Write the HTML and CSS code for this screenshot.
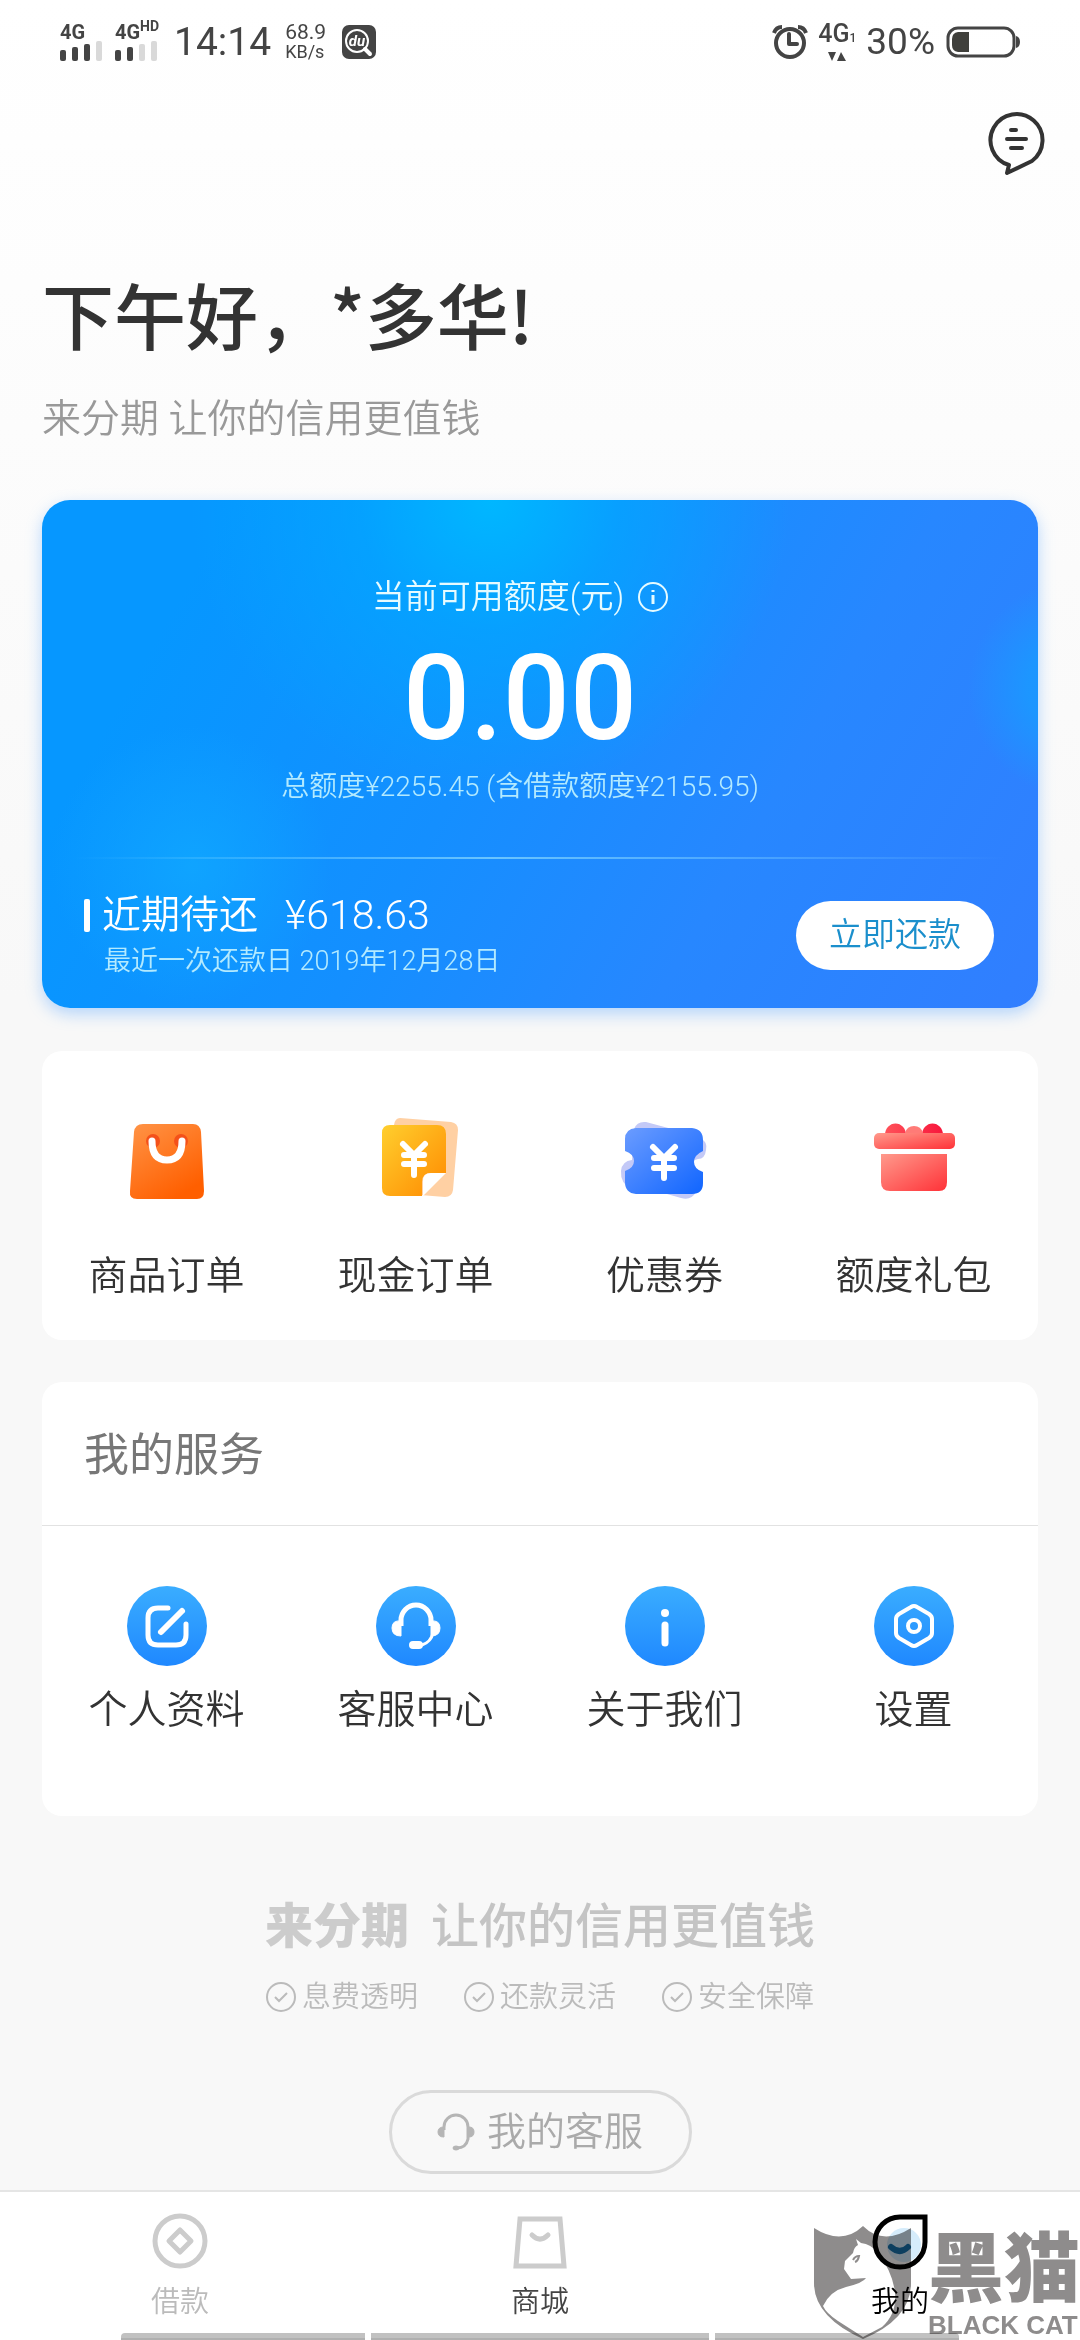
FILE: index.html
```html
<!DOCTYPE html>
<html lang="zh-CN">
<head>
    <title>我的</title>
    <meta charset="UTF-8">
    <meta name="viewport" content="width=device-width, initial-scale=1.0">
    <link rel="stylesheet" href="styles.css">
</head>
<body>
<div class="statusbar">
    <div class="signal">
        <span class="net">4G</span>
        <svg width="42" height="20" viewBox="0 0 42 20" fill="#444">
            <rect y="9" width="6" height="11" rx="2"/>
            <rect x="12" y="6" width="6" height="14" rx="2"/>
            <rect x="24" y="3" width="6" height="17" rx="2"/>
            <rect x="36" width="6" height="20" rx="2" fill="#d9d9d9"/>
        </svg>
    </div>
    <div class="signal">
        <span class="net">4G<sup>HD</sup></span>
        <svg width="42" height="20" viewBox="0 0 42 20" fill="#444">
            <rect y="9" width="6" height="11" rx="2"/>
            <rect x="12" y="6" width="6" height="14" rx="2"/>
            <rect x="24" y="3" width="6" height="17" rx="2" fill="#d9d9d9"/>
            <rect x="36" width="6" height="20" rx="2" fill="#d9d9d9"/>
        </svg>
    </div>
    <span class="clock">14:14</span>
    <span class="speed">68.9<small>KB/s</small></span>
    <span class="du">
        <svg width="34" height="34" viewBox="0 0 34 34">
            <rect width="34" height="34" rx="7" fill="#444"/>
            <circle cx="15" cy="16" r="11" fill="none" stroke="#fff" stroke-width="2"/>
            <path d="M23 24l5 5" stroke="#fff" stroke-width="4" stroke-linecap="round"/>
            <text x="15" y="21" class="du-text">du</text>
        </svg>
    </span>
    <div class="status-right">
        <svg width="36" height="36" viewBox="0 0 36 36" fill="none" stroke="#444">
            <circle cx="18" cy="19" r="14" stroke-width="4"/>
            <path d="M17 10v10h8" stroke-width="4" stroke-linecap="round" stroke-linejoin="round"/>
            <path d="M2 9q2-6 8-6M34 9q-2-6-8-6" stroke-width="4"/>
        </svg>
        <div class="data">
            <span>4G<small>1</small></span>
            <svg width="18" height="9" viewBox="0 0 18 9" fill="#444"><path d="M0 0h8l-4 9zM9 9h9l-5-9z"/></svg>
        </div>
        <span class="percent">30%</span>
        <svg width="73" height="30" viewBox="0 0 73 30">
            <rect x="1" y="1" width="66" height="28" rx="10" fill="none" stroke="#444" stroke-width="3"/>
            <path d="M11 5h11v20H11q-6-1-6-7v-6q0-6 6-7z" fill="#40403c"/>
            <path d="M69 9q4 1 4 6t-4 6z" fill="#444"/>
        </svg>
    </div>
</div>

<main>
    <div class="topbar">
        <button class="icon-btn" aria-label="消息">
            <svg width="60" height="64" viewBox="0 0 60 64" fill="none" stroke="#333" stroke-width="4" stroke-linecap="round" stroke-linejoin="round">
                <path d="M23 53A26 26 0 1 1 46 49L21 61z"/>
                <path d="M25 18h5M21 27h19M25 36h11"/>
            </svg>
        </button>
    </div>
    <h1>下午好，*多华!</h1>
    <p class="subtitle">来分期 让你的信用更值钱</p>

    <section class="credit">
        <div class="credit-main">
            <p class="credit-label">当前可用额度(元)
                <svg width="30" height="30" viewBox="0 0 30 30" fill="none" stroke="#e6fbff" stroke-width="2">
                    <circle cx="15" cy="15" r="14"/>
                    <path d="M15 13v9M15 8v2" stroke-width="3"/>
                </svg>
            </p>
            <p class="amount">0.00</p>
            <p class="credit-sub">总额度¥2255.45 (含借款额度¥2155.95)</p>
        </div>
        <div class="credit-line"></div>
        <div class="repay">
            <div>
                <p class="repay-title">近期待还<span>¥618.63</span></p>
                <p class="repay-date">最近一次还款日 2019年12月28日</p>
            </div>
            <button class="repay-btn">立即还款</button>
        </div>
    </section>

    <nav class="card orders">
        <a href="#" class="item">
            <svg width="80" height="80" viewBox="0 0 80 80">
                <defs>
                    <linearGradient id="bag" x1="0" y1="0" x2=".6" y2="1"><stop stop-color="#ff9447"/><stop offset="1" stop-color="#ff5f00"/></linearGradient>
                </defs>
                <path d="M16 3h50q7 0 8 8l3 59q0 8-7 8H10q-8 0-7-8l4-59q1-8 9-8z" fill="url(#bag)"/>
                <circle cx="26" cy="20" r="7" fill="#f4511a"/>
                <circle cx="54" cy="20" r="7" fill="#f4511a"/>
                <path d="M25 20q0 19 15 19t15-19" fill="none" stroke="#fff" stroke-width="7" stroke-linecap="round"/>
            </svg>
            <span>商品订单</span>
        </a>
        <a href="#" class="item">
            <svg width="80" height="80" viewBox="0 0 80 80">
                <defs>
                    <linearGradient id="cash" x1="0" y1="0" x2="1" y2="1"><stop stop-color="#ffcf2e"/><stop offset="1" stop-color="#ff8a00"/></linearGradient>
                </defs>
                <path d="M24-3l51 4q7 1 7 8l-5 60q-1 7-8 7l-50-4q-6-1-5-8l4-60q1-7 6-7z" fill="#ffd0a3"/>
                <path d="M14 4h47q9 0 9 9v39H55q-9 0-9 9v14H14q-8 0-8-8V12q0-8 8-8z" fill="url(#cash)"/>
                <path d="M70 52L47 75V60q0-8 8-8z" fill="#fff"/>
                <path d="M27 23l11 11 11-11M28 34h20M28 43h20M38 34v20" fill="none" stroke="#fff" stroke-width="6" stroke-linecap="round" stroke-linejoin="round"/>
            </svg>
            <span>现金订单</span>
        </a>
        <a href="#" class="item">
            <svg width="88" height="80" viewBox="0 0 88 80">
                <defs>
                    <linearGradient id="coupon" x1="0" y1="0" x2="1" y2="1"><stop stop-color="#6b9cff"/><stop offset="1" stop-color="#1065ff"/></linearGradient>
                </defs>
                <path d="M13 8q3-8 12-7l26 7 29 10q7 3 5 11-1 9-8 9l-6 2 4 31q-5 9-15 6l-14-4-35-4Q-1 62 0 50q1-10 11-11z" fill="#c3c9f7"/>
                <path d="M15 7h56q11 1 11 12v11q-9 4-9 11t9 10v11q0 11-11 11H15Q4 72 4 61V50q9-3 9-10T4 30V18Q4 8 15 7z" fill="url(#coupon)"/>
                <path d="M32 26l11 11 11-11M33 37h20M33 47h20M43 37v20" fill="none" stroke="#fff" stroke-width="6" stroke-linecap="round" stroke-linejoin="round"/>
            </svg>
            <span>优惠券</span>
        </a>
        <a href="#" class="item">
            <svg width="82" height="80" viewBox="0 0 82 80">
                <defs>
                    <linearGradient id="gift" x1="0" y1="0" x2="1" y2="1"><stop stop-color="#ff9a8c"/><stop offset="1" stop-color="#ff3238"/></linearGradient>
                    <linearGradient id="bow" x1="0" x2="1"><stop stop-color="#ff5159"/><stop offset="1" stop-color="#f8173c"/></linearGradient>
                </defs>
                <path d="M12 14a10 11 0 0 1 21 0zM49 14a10 11 0 0 1 21 0z" fill="url(#bow)"/>
                <path d="M32 12q2-7 9-7t9 7v3H32z" fill="#ff7b77"/>
                <rect x="1" y="12" width="81" height="16" rx="5" fill="url(#gift)"/>
                <path d="M8 33h66v28q0 9-8 9H17q-9 0-9-9z" fill="url(#gift)"/>
            </svg>
            <span>额度礼包</span>
        </a>
    </nav>

    <section class="card services">
        <h2>我的服务</h2>
        <nav class="service-list">
            <a href="#" class="item">
                <svg class="round" width="80" height="80" viewBox="0 0 80 80" fill="none" stroke="#fff" stroke-width="5" stroke-linecap="round">
                    <path d="M41 22H31q-10 0-10 10v17q0 10 10 10h18q10 0 10-10V38"/>
                    <path d="M34 46l21-21" stroke-width="6"/>
                </svg>
                <span>个人资料</span>
            </a>
            <a href="#" class="item">
                <svg class="round" width="80" height="80" viewBox="0 0 80 80" fill="none" stroke="#fff">
                    <path d="M25 40v-6a15 15 0 0 1 30 0v6" stroke-width="5"/>
                    <path d="M25 35v15q-9 0-9-8t9-7zM55 35v15q9 0 9-8t-9-7z" fill="#fff" stroke-width="1"/>
                    <path d="M57 47q-2 9-11 12" stroke-width="3"/>
                    <rect x="34" y="56" width="12" height="6" rx="3" fill="#fff" stroke-width="2"/>
                </svg>
                <span>客服中心</span>
            </a>
            <a href="#" class="item">
                <svg class="round" width="80" height="80" viewBox="0 0 80 80">
                    <circle cx="40" cy="27" r="4" fill="#fff"/>
                    <path d="M40 39v18" stroke="#fff" stroke-width="7" stroke-linecap="round"/>
                </svg>
                <span>关于我们</span>
            </a>
            <a href="#" class="item">
                <svg class="round" width="80" height="80" viewBox="0 0 80 80" fill="none" stroke="#fff" stroke-linejoin="round">
                    <path d="M37 21q3-2 6 0l12 7q3 2 3 5v14q0 3-3 5l-12 7q-3 2-6 0l-12-7q-3-2-3-5V33q0-3 3-5z" stroke-width="4"/>
                    <circle cx="40" cy="40" r="6" stroke-width="4"/>
                </svg>
                <span>设置</span>
            </a>
        </nav>
    </section>

    <footer>
        <p class="slogan"><strong>来分期</strong>让你的信用更值钱</p>
        <ul class="promises">
            <li><svg width="30" height="30" viewBox="0 0 30 30"><circle cx="15" cy="15" r="14"/><path d="M9 15l4 4 8-8"/></svg>息费透明</li>
            <li><svg width="30" height="30" viewBox="0 0 30 30"><circle cx="15" cy="15" r="14"/><path d="M9 15l4 4 8-8"/></svg>还款灵活</li>
            <li><svg width="30" height="30" viewBox="0 0 30 30"><circle cx="15" cy="15" r="14"/><path d="M9 15l4 4 8-8"/></svg>安全保障</li>
        </ul>
        <button class="support-btn">
            <svg width="38" height="38" viewBox="0 0 38 38" fill="none" stroke="#b5b5b5" stroke-width="3">
                <path d="M7 17V14a12 12 0 0 1 24 0v12q-2 9-11 9"/>
                <path d="M7 14v10q-6 0-6-5t6-5zM32 14v10q5 0 5-5t-5-5z" fill="#b5b5b5" stroke-width="1"/>
                <ellipse cx="19" cy="35" rx="3" ry="2" fill="#b5b5b5" stroke-width="1"/>
            </svg>
            我的客服
        </button>
    </footer>
</main>

<nav class="tabbar">
    <a href="#" class="tab muted">
        <svg width="56" height="56" viewBox="0 0 56 56" fill="none" stroke="#ccc" stroke-width="5" stroke-linejoin="round">
            <circle cx="28" cy="28" r="25"/>
            <path d="M28 17l11 11-11 11-11-11z"/>
        </svg>
        <span>借款</span>
    </a>
    <a href="#" class="tab">
        <svg width="56" height="56" viewBox="0 0 56 56" fill="none" stroke="#ccc" stroke-width="5">
            <path d="M8 6h40l4 47H4z"/>
            <path d="M20 22q8 8 16 0" stroke-linecap="round"/>
        </svg>
        <span>商城</span>
    </a>
    <a href="#" class="tab active">
        <svg width="56" height="56" viewBox="0 0 56 56" fill="none" stroke="#000" stroke-width="5">
            <circle cx="32" cy="32" r="17" fill="#d5ecfb" stroke="none"/>
            <path d="M28 4h25v25a25 25 0 1 1-25-25z"/>
            <path d="M19 34q9 8 17 0" stroke="#1673ac" stroke-width="6" stroke-linecap="round"/>
        </svg>
        <span>我的</span>
    </a>
</nav>
<div class="gesture"><i></i><i></i><i></i></div>

<div class="watermark">
    <svg width="98" height="115" viewBox="0 0 98 115">
        <path d="M0 3q28 18 49-2 20 20 48 2v55q0 36-48 56Q0 92 0 58z" fill="#8e8c8c"/>
        <path d="M42 14l5 4q10 1 17 10 14 18 17 39 2 22-13 35L49 112 24 96Q12 88 9 81q7-15 23-19 17-4 20-9l-15 1-7-10 1-8 8-8q1-6 5-8z" fill="#fff"/>
        <path d="M39 35q2-4 6-4-1 5-4 6" fill="none" stroke="#8e8c8c" stroke-width="2"/>
    </svg>
    <div class="watermark-text"><b>黑猫</b><span>BLACK CAT</span></div>
</div>
</body>
</html>
```
FILE: styles.css
```css
* {
    box-sizing: border-box;
}
body {
    display: flex;
    flex-direction: column;
    position: relative;
    min-height: 100vh;
    margin: 0;
    color: #333;
    background: linear-gradient(#fff, #f8f8f8 1000px);
    font-family: Roboto, "Noto Sans CJK SC", sans-serif;
    font-size: 39px;
    font-weight: 350;
    line-height: 40px;
}
h1, h2, p, ul {
    margin: 0;
    padding: 0;
}
a {
    color: inherit;
    text-decoration: none;
}
button {
    font: inherit;
    padding: 0;
    border: 0;
    background: none;
}
svg {
    flex: none;
    overflow: visible;
}

/* phone status bar */
.statusbar {
    display: flex;
    align-items: center;
    height: 84px;
    padding: 0 60px;
    color: #444;
    font-weight: 400;
}
.signal {
    display: flex;
    flex-direction: column;
    width: 55px;
    height: 38px;
}
.net {
    font-size: 20px;
    font-weight: 700;
    line-height: 18px;
    white-space: nowrap;
}
.net sup {
    font-size: 14px;
    line-height: 0;
}
.clock {
    margin-left: 4px;
    font-size: 39px;
}
.speed {
    display: flex;
    flex-direction: column;
    margin-left: 14px;
    font-size: 21px;
    line-height: 20px;
}
.speed small {
    font-size: 18px;
}
.du {
    display: flex;
    margin-left: 16px;
}
.du-text {
    fill: #fff;
    font-size: 15px;
    font-weight: 700;
    font-style: italic;
    text-anchor: middle;
}
.status-right {
    display: flex;
    align-items: center;
    margin-left: auto;
}
.data {
    display: flex;
    flex-direction: column;
    align-items: center;
    gap: 4px;
    margin: 0 10px;
    font-size: 25px;
    font-weight: 500;
    line-height: 20px;
}
.data small {
    font-size: 12px;
}
.percent {
    margin-right: 12px;
    font-size: 37px;
}

main {
    flex: 1;
    padding: 0 42px 16px;
}
.topbar {
    display: flex;
    justify-content: flex-end;
    padding-top: 28px;
    margin-right: -8px;
}
.icon-btn {
    display: flex;
}
h1 {
    margin-top: 101px;
    font-family: "Noto Sans CJK SC", sans-serif;
    font-size: 72px;
    font-weight: 500;
    line-height: 72px;
}
.subtitle {
    margin-top: 50px;
    color: #999;
}

/* credit limit */
.credit {
    margin-top: 61px;
    padding: 79px 0 31px;
    border-radius: 28px;
    color: #fff;
    background:
        radial-gradient(circle at 45% 0, #00b7ff, rgba(0, 170, 255, 0.6) 130px, rgba(0, 160, 255, 0) 300px),
        radial-gradient(circle at 104% 37%, rgba(27, 152, 255, 0.9) 50px, rgba(27, 152, 255, 0) 110px),
        radial-gradient(circle at 15% 72%, rgba(16, 168, 255, 0.8), rgba(16, 160, 255, 0) 140px),
        linear-gradient(120deg, #0697ff 15%, #148fff 45%, #2787ff 70%, #317eff);
    box-shadow: 0 6px 16px rgba(80, 160, 255, 0.4);
}
.credit-main {
    padding-right: 40px;
    text-align: center;
}
.credit-label {
    display: flex;
    align-items: center;
    justify-content: center;
    gap: 14px;
    color: #e6fbff;
    font-size: 33px;
    line-height: 36px;
}
.amount {
    margin-top: 42px;
    font-size: 118px;
    font-weight: 500;
    line-height: 84px;
}
.credit-sub {
    margin-top: 30px;
    color: #b3eaff;
    font-size: 28px;
    line-height: 32px;
}
.credit-line {
    height: 2px;
    margin: 54px 32px 0;
    background: linear-gradient(90deg, transparent, rgba(140, 220, 255, 0.7) 45%, transparent);
}
.repay {
    display: flex;
    align-items: center;
    justify-content: space-between;
    padding: 34px 44px 0 42px;
}
.repay-title {
    display: flex;
    align-items: center;
    line-height: 44px;
}
.repay-title::before {
    content: "";
    width: 6px;
    height: 33px;
    margin-right: 12px;
    border-radius: 2px;
    background-color: #fff;
}
.repay-title span {
    margin-left: 27px;
    font-size: 41px;
}
.repay-date {
    margin: 8px 0 0 20px;
    color: #b3eaff;
    font-size: 27px;
    line-height: 32px;
}
.repay-btn {
    width: 198px;
    height: 69px;
    border-radius: 35px;
    color: #1b8fcc;
    background-color: #fff;
    font-size: 33px;
}

/* white cards */
.card {
    border-radius: 20px;
    background-color: #fff;
}
.orders {
    display: grid;
    grid-template-columns: repeat(4, 1fr);
    margin-top: 43px;
    padding: 70px 0 44px;
}
.item {
    display: flex;
    flex-direction: column;
    align-items: center;
}
.orders .item {
    gap: 55px;
}
.services {
    margin-top: 42px;
}
h2 {
    padding: 5px 42px 0;
    border-bottom: 1px solid #e2e2e2;
    color: #777;
    font-size: 45px;
    font-weight: 400;
    line-height: 138px;
}
.service-list {
    display: grid;
    grid-template-columns: repeat(4, 1fr);
    padding: 60px 0 86px;
}
.service-list .item {
    gap: 24px;
}
.round {
    border-radius: 50%;
    background: linear-gradient(#3aadff, #1f88ff);
}

footer {
    display: flex;
    flex-direction: column;
    align-items: center;
    margin-top: 87px;
}
.slogan {
    color: #c4c4c4;
    font-size: 48px;
    font-weight: 500;
    line-height: 48px;
}
.slogan strong {
    margin-right: 22px;
    color: #ccc;
    font-weight: 900;
}
.promises {
    display: flex;
    gap: 46px;
    margin-top: 30px;
    list-style: none;
    color: #bbb;
    font-size: 29px;
    line-height: 32px;
}
.promises li {
    display: flex;
    align-items: center;
    gap: 6px;
}
.promises svg {
    fill: none;
    stroke: #bbb;
    stroke-width: 2;
}
.support-btn {
    display: flex;
    align-items: center;
    justify-content: center;
    gap: 12px;
    width: 303px;
    height: 84px;
    margin-top: 77px;
    border: 3px solid #dadada;
    border-radius: 42px;
    color: #aaa;
}

/* bottom tabs */
.tabbar {
    display: grid;
    grid-template-columns: repeat(3, 1fr);
    padding: 21px 0 15px;
    border-top: 2px solid #e5e5e5;
    background-color: #fff;
}
.tab {
    display: flex;
    flex-direction: column;
    align-items: center;
    gap: 17px;
    color: #444;
    font-size: 29px;
    line-height: 32px;
}
.muted {
    color: #bbb;
}
.active {
    color: #000;
}
.gesture {
    display: flex;
    gap: 6px;
    padding: 0 121px;
    background-color: #fff;
}
.gesture i {
    flex: 244;
    height: 7px;
    border-bottom: 2px solid #b0b0b0;
    background-color: #c1c1c1;
}
.gesture i:nth-child(2) {
    flex: 338;
}
.gesture i:first-child {
    border-top-left-radius: 4px;
}
.gesture i:last-child {
    border-top-right-radius: 4px;
}

.watermark {
    display: flex;
    position: absolute;
    right: 0;
    bottom: 0;
    gap: 16px;
    color: #8e8c8c;
    mix-blend-mode: multiply;
    pointer-events: none;
}
.watermark-text {
    display: flex;
    flex-direction: column;
    justify-content: flex-end;
    padding-bottom: 3px;
    font-family: "Liberation Sans", "Noto Sans CJK SC", sans-serif;
    font-size: 26px;
    font-weight: 700;
    line-height: 24px;
}
.watermark-text b {
    font-size: 76px;
    font-weight: 900;
    line-height: 86px;
}
```
